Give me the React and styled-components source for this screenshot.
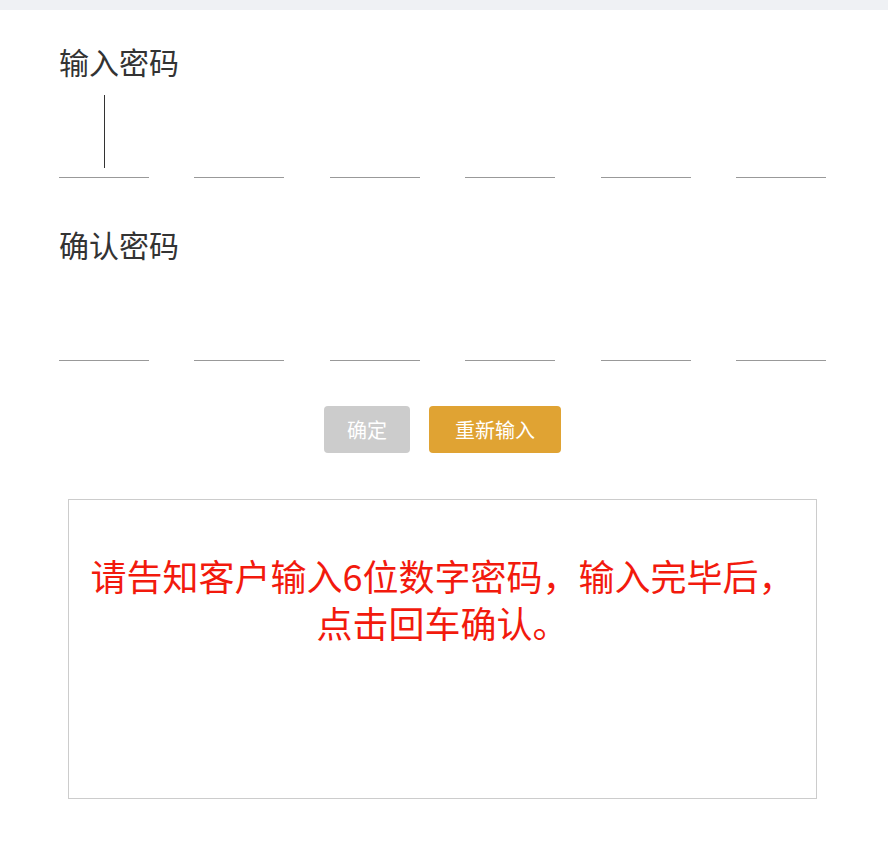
import React from "react";
import styled, { createGlobalStyle } from "styled-components";

const GlobalStyle = createGlobalStyle`
  html, body {
    margin: 0;
    padding: 0;
    background: #fff;
  }
  body {
    font-family: "Noto Sans CJK SC", "Liberation Sans", sans-serif;
    color: #333;
  }
`;

const App = () => {
  return (
    <>
      <GlobalStyle />
      <TopBar />
      <Page>
        <Section $first>
          <Title>输入密码</Title>
          <DigitRow>
            {[0, 1, 2, 3, 4, 5].map((i) => (
              <DigitBox key={i}>{i === 0 && <Caret />}</DigitBox>
            ))}
          </DigitRow>
        </Section>
        <Section>
          <Title>确认密码</Title>
          <DigitRow>
            {[0, 1, 2, 3, 4, 5].map((i) => (
              <DigitBox key={i} />
            ))}
          </DigitRow>
        </Section>
        <ButtonRow>
          <Button $bg="#cccccc" $width="86px">确定</Button>
          <Button $bg="#e0a333" $width="132px">重新输入</Button>
        </ButtonRow>
        <NoticeBox>
          <Notice>请告知客户输入6位数字密码，输入完毕后，点击回车确认。</Notice>
        </NoticeBox>
      </Page>
    </>
  );
};

export default App;

const TopBar = styled.div`
  height: 10px;
  background: #eff1f4;
`;

const Page = styled.div`
  padding: 0 62px 40px 59px;
`;

const Section = styled.div`
  margin-top: ${(p) => (p.$first ? "36px" : "51px")};
`;

const Title = styled.div`
  font-size: 30px;
  line-height: 30px;
  color: #333;
`;

const DigitRow = styled.div`
  display: flex;
  justify-content: space-between;
  margin-top: 10px;
`;

const DigitBox = styled.div`
  width: 90px;
  height: 91px;
  border-bottom: 1px solid #999;
  display: flex;
  align-items: center;
  justify-content: center;
`;

const Caret = styled.span`
  width: 1px;
  height: 73px;
  background: #333;
`;

const ButtonRow = styled.div`
  display: flex;
  justify-content: center;
  gap: 19px;
  margin-top: 45px;
`;

const Button = styled.button`
  width: ${(p) => p.$width};
  height: 47px;
  padding: 0;
  border: none;
  border-radius: 4px;
  background: ${(p) => p.$bg};
  color: #fff;
  font-family: "Noto Sans CJK SC", "Liberation Sans", sans-serif;
  font-size: 20px;
  cursor: pointer;
`;

const NoticeBox = styled.div`
  margin: 46px 9px 0;
  height: 300px;
  box-sizing: border-box;
  border: 1px solid #ccc;
  padding: 52px 20px 0;
`;

const Notice = styled.div`
  font-size: 36px;
  line-height: 47px;
  color: #f21a0d;
  text-align: center;
`;
